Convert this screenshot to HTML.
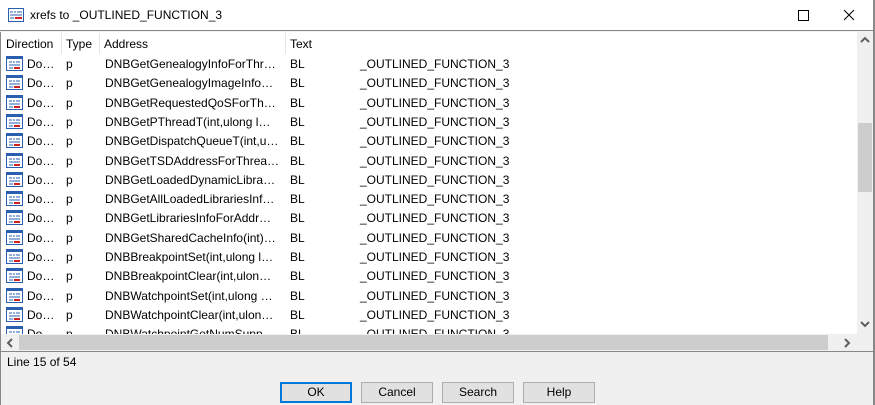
<!DOCTYPE html><html><head><style>
*{margin:0;padding:0;box-sizing:border-box}
body{width:875px;height:405px;background:#f0f0f0;font-family:"Liberation Sans",sans-serif;font-size:12px;color:#000;position:relative;overflow:hidden}
.a{position:absolute;white-space:nowrap}
.row{position:absolute;left:1px;width:855px;height:19px}
.row span{position:absolute;top:2px}
.btn{position:absolute;top:382px;height:21px;width:72px;background:#e1e1e1;border:1px solid #adadad;text-align:center;line-height:19px}
</style></head><body>
<div class="a" style="left:0;top:0;width:875px;height:31px;background:#fff;border-bottom:1px solid #888"></div>
<svg class="a" style="left:8px;top:8px" width="16" height="14" viewBox="0 0 16 14"><rect x="0.5" y="0.5" width="15" height="13" fill="#fff" stroke="#2a5fb0"/><path d="M2 4h3M6 4h2M9 4h5M2 7h12M2 10h4" stroke="#2a5fb0"/><path d="M7 10h7" stroke="#d02020" stroke-width="2"/></svg>
<div class="a" style="left:30px;top:8px;font-size:12px">xrefs to _OUTLINED_FUNCTION_3</div>
<div class="a" style="left:798px;top:10px;width:11px;height:11px;border:1px solid #000"></div>
<svg class="a" style="left:843px;top:9px" width="12" height="12"><path d="M1 1L11 11M11 1L1 11" stroke="#000"/></svg>
<div class="a" style="left:0;top:32px;width:1px;height:373px;background:#888"></div>
<div class="a" style="left:873px;top:0;width:2px;height:405px;background:#888"></div>
<div class="a" style="left:1px;top:32px;width:856px;height:302px;background:#fff"></div>
<div class="a" style="left:1px;top:33px;width:856px;height:21px;background:#fff"></div>
<div class="a" style="left:61px;top:33px;width:1px;height:21px;background:#e5e5e5"></div>
<div class="a" style="left:99px;top:33px;width:1px;height:21px;background:#e5e5e5"></div>
<div class="a" style="left:285px;top:33px;width:1px;height:21px;background:#e5e5e5"></div>
<div class="a" style="left:6px;top:37px">Direction</div>
<div class="a" style="left:66px;top:37px">Type</div>
<div class="a" style="left:104px;top:37px">Address</div>
<div class="a" style="left:290px;top:37px">Text</div>
<div class="a" style="left:1px;top:55px;width:856px;height:279px;overflow:hidden">
<div id="rows"></div>
</div>
<div class="a" style="left:857px;top:32px;width:16px;height:302px;background:#f0f0f0"></div>
<div class="a" style="left:858px;top:123px;width:14px;height:69px;background:#cdcdcd"></div>
<svg class="a" style="left:860px;top:36px" width="10" height="8"><path d="M1 6L5 2L9 6" stroke="#606060" stroke-width="2" fill="none"/></svg>
<svg class="a" style="left:860px;top:320px" width="10" height="8"><path d="M1 2L5 6L9 2" stroke="#606060" stroke-width="2" fill="none"/></svg>
<div class="a" style="left:1px;top:334px;width:856px;height:17px;background:#f0f0f0"></div>
<div class="a" style="left:19px;top:335px;width:809px;height:15px;background:#cdcdcd"></div>
<svg class="a" style="left:6px;top:338px" width="8" height="10"><path d="M6 1L2 5L6 9" stroke="#606060" stroke-width="2" fill="none"/></svg>
<svg class="a" style="left:843px;top:338px" width="8" height="10"><path d="M2 1L6 5L2 9" stroke="#606060" stroke-width="2" fill="none"/></svg>
<div class="a" style="left:1px;top:351px;width:872px;height:1px;background:#888"></div>
<div class="a" style="left:7px;top:355px">Line 15 of 54</div>
<div class="btn" style="left:280px;border:2px solid #0078d7;line-height:17px">OK</div>
<div class="btn" style="left:361px">Cancel</div>
<div class="btn" style="left:442px">Search</div>
<div class="btn" style="left:523px">Help</div>
<script>
var n=["DNBGetGenealogyInfoForThr…","DNBGetGenealogyImageInfo…","DNBGetRequestedQoSForTh…","DNBGetPThreadT(int,ulong l…","DNBGetDispatchQueueT(int,u…","DNBGetTSDAddressForThrea…","DNBGetLoadedDynamicLibra…","DNBGetAllLoadedLibrariesInf…","DNBGetLibrariesInfoForAddr…","DNBGetSharedCacheInfo(int)…","DNBBreakpointSet(int,ulong l…","DNBBreakpointClear(int,ulon…","DNBWatchpointSet(int,ulong …","DNBWatchpointClear(int,ulon…","DNBWatchpointGetNumSupp…"];
var h="",ic='<svg style="position:absolute;left:4px;top:1px" width="17" height="15" viewBox="0 0 17 15"><rect x="0.5" y="0.5" width="16" height="14" fill="#fff" stroke="#2a5fb0"/><rect x="1" y="1" width="15" height="2" fill="#2a5fb0"/><path d="M3 6h3M7 6h2M10 6h4M3 9h11M3 12h4" stroke="#2a5fb0"/><path d="M8 12h6" stroke="#d02020" stroke-width="2"/></svg>';
for(var i=0;i<n.length;i++){h+='<div class="row" style="top:'+(i*19.3)+'px">'+ic+'<span style="left:25px">Do…</span><span style="left:64px">p</span><span style="left:103px">'+n[i]+'</span><span style="left:288px">BL</span><span style="left:358px">_OUTLINED_FUNCTION_3</span></div>';}
document.getElementById("rows").innerHTML=h;
</script>
</body></html>
